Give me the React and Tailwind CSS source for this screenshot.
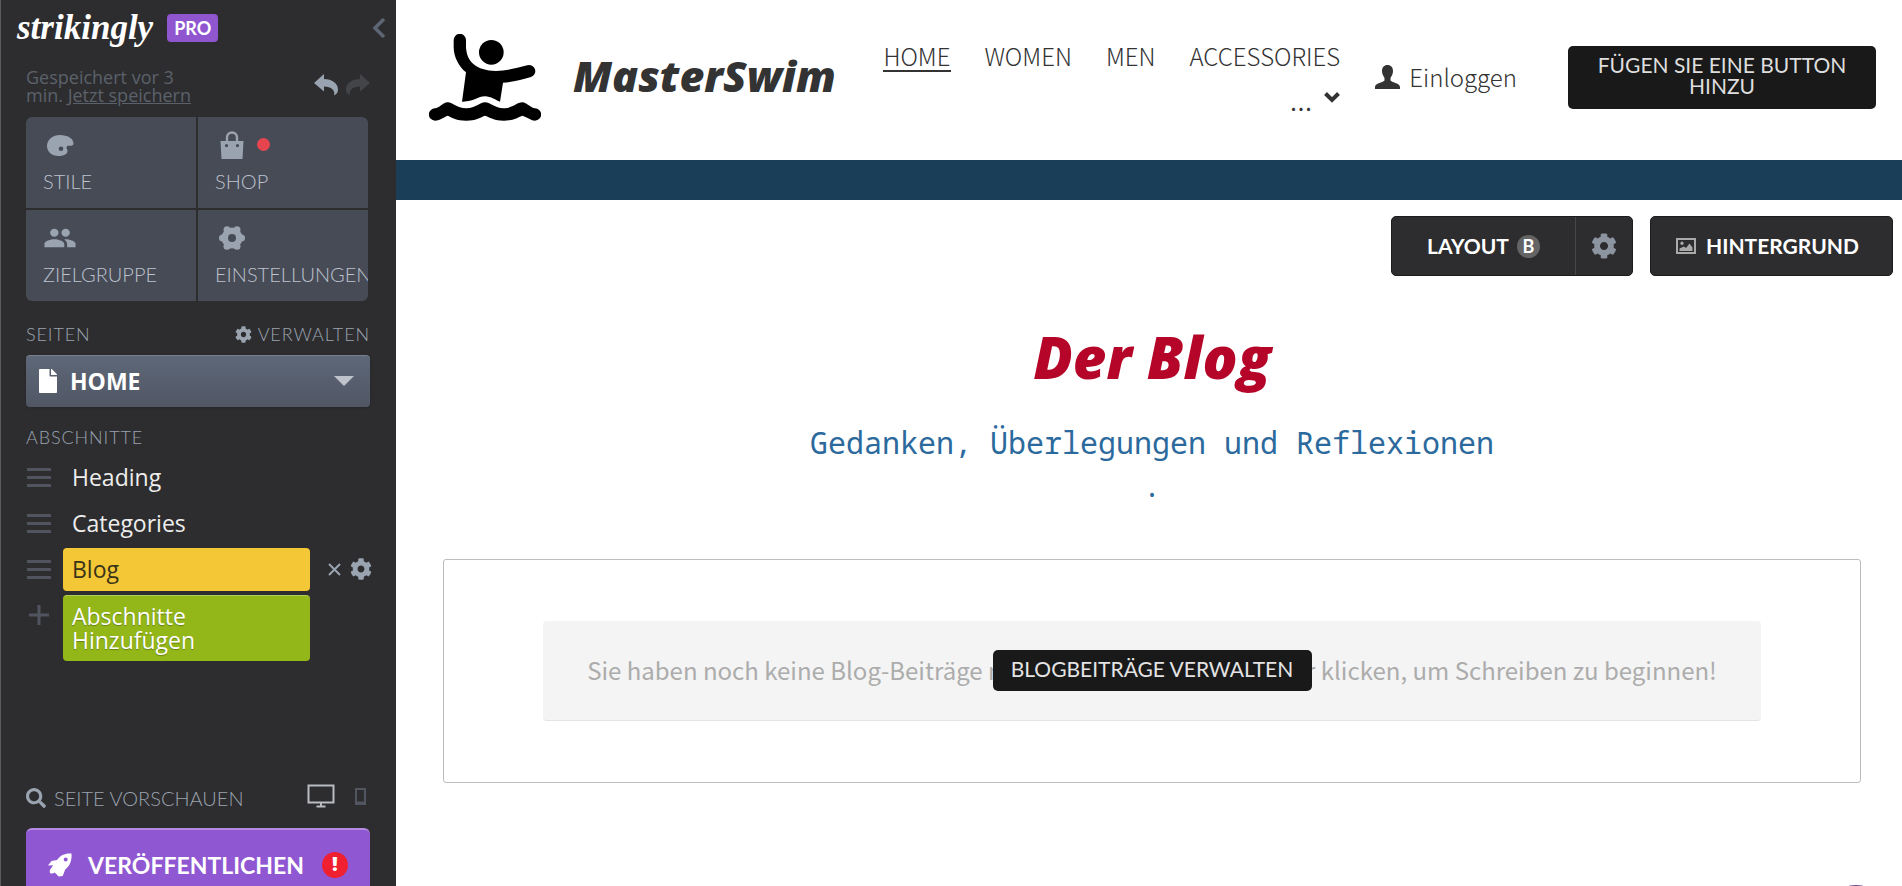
import React, { useState } from 'react';
import { FaCog, FaSearch, FaFile } from 'react-icons/fa';
import { MdPeople } from 'react-icons/md';

const tiles = [
  { label: 'STILE', icon: PaletteIcon, corner: 'rounded-tl-md' },
  { label: 'SHOP', icon: BagIcon, corner: 'rounded-tr-md', dot: true },
  { label: 'ZIELGRUPPE', icon: PeopleIcon, corner: 'rounded-bl-md' },
  { label: 'EINSTELLUNGEN', icon: FlowerGearIcon, corner: 'rounded-br-md' },
];

const navLinks = ['HOME', 'WOMEN', 'MEN', 'ACCESSORIES'];

function PaletteIcon() {
  return (
    <svg className="w-8 h-8" viewBox="0 0 32 32" fill="currentColor">
      <path
        fillRule="evenodd"
        d="M17 6C10 6 4 10.500 4 17c0 6 5 10 11.500 10 5 0 9-1.800 9-5 0-1.500-1-2-1-3.300 0-1.400 1.200-2 2.600-1.900 2.500.2 4.400-.3 4.400-2.300C30.500 9.500 24.500 6 17 6Zm1 11.500a2.300 2.300 0 1 1 0 4.600 2.300 2.300 0 0 1 0-4.600Z"
      />
    </svg>
  );
}

function BagIcon() {
  return (
    <svg className="w-8 h-8" viewBox="0 0 32 32" fill="currentColor">
      <path d="M12 12V8.500a5 5 0 0 1 10 0V12" fill="none" stroke="currentColor" strokeWidth="2.400" />
      <path
        fillRule="evenodd"
        d="M5.500 12h23l-1 18h-21ZM11.500 15a1.600 1.600 0 1 0 0 3.200 1.600 1.600 0 0 0 0-3.200Zm11 0a1.600 1.600 0 1 0 0 3.200 1.600 1.600 0 0 0 0-3.200Z"
      />
    </svg>
  );
}

function PeopleIcon() {
  return <MdPeople className="w-[34px] h-8" preserveAspectRatio="none" />;
}

function FlowerGearIcon() {
  return (
    <svg className="w-8 h-8" viewBox="0 0 32 32" fill="currentColor">
      <circle cx="17" cy="16" r="10.500" />
      <circle cx="7.500" cy="16" r="3.500" />
      <circle cx="26.500" cy="16" r="3.500" />
      <circle cx="12" cy="7.700" r="3.500" />
      <circle cx="22" cy="7.700" r="3.500" />
      <circle cx="12" cy="24.300" r="3.500" />
      <circle cx="22" cy="24.300" r="3.500" />
      <circle cx="17" cy="16" r="4" fill="#474b56" />
    </svg>
  );
}

function UndoIcon({ className }) {
  return (
    <svg className={className} viewBox="0 0 24 22" fill="currentColor">
      <path d="M10 0v5c8 0 14 4.500 14 10.500 0 2.500-1 4.500-4 6 1.500-5-2.500-9-10-9v5L0 9Z" />
    </svg>
  );
}

function RocketIcon() {
  return (
    <svg className="w-6 h-6" viewBox="0 0 24 24" fill="currentColor">
      <path
        fillRule="evenodd"
        d="M23.500.5C17 0 12.500 2 9 7L3.500 8 0 12.500l5-.3-2 3.300c-1.500 1-1.500 3-.8 4.700 1.500.5 3.300.3 4.500-.7l4 4 4-.5 2.500-6.500C22 13 24 7.500 23.500.5ZM17.700 4.500a2 2 0 1 1 0 4 2 2 0 0 1 0-4Z"
      />
    </svg>
  );
}

function SwimmerLogo() {
  return (
    <svg className="w-[112px] shrink-0" viewBox="99 102 336 260" role="img" aria-label="MasterSwim">
      <circle cx="286" cy="157" r="37" />
      <path d="M173 120a18.500 18.500 0 0 1 37 0v22c2 43 30 70 90 71 30-1 60-8 94-17a18 18 0 0 1 11 35c-25 8-55 15-84 17l-9 57c-12-4-27-16-45-16-22 0-35 17-69 16l12-88c-22-17-37-47-37-75Z" />
      <path d="M117 325c13 0 23-17 38-18 17 0 25 18 56 18 29 0 39-18 56-18 18 0 28 18 56 18 27 0 39-18 56-18 13 0 26 18 38 18a18 18 0 0 1 0 37c-12 0-22-10-38-15-14 6-29 15-56 15-28 0-38-9-56-15-17 6-27 15-56 15-31 0-41-9-56-15-15 6-25 15-38 15a18 18 0 0 1 0-37Z" />
    </svg>
  );
}

function DragHandle() {
  return (
    <button type="button" aria-label="Verschieben" className="w-6 flex flex-col gap-[5px] shrink-0">
      <span className="h-[3px] w-full bg-[#4f545e]" />
      <span className="h-[3px] w-full bg-[#4f545e]" />
      <span className="h-[3px] w-full bg-[#4f545e]" />
    </button>
  );
}

function Sidebar() {
  const [page, setPage] = useState('HOME');

  return (
    <aside className="w-[396px] shrink-0 h-screen overflow-hidden flex flex-col bg-[#2d2d2f] border-l border-[#5a5b5d] text-[#9aa3b0]">
      <div className="flex items-center pl-4 pr-[9px] h-14">
        <a href="#" className="font-['Liberation_Serif',serif] font-bold italic text-[35px] leading-10 text-white">strikingly</a>
        <span className="ml-[14px] px-[7px] h-7 rounded bg-[#8f56d0] text-white font-['Lato',sans-serif] font-bold text-lg leading-7">PRO</span>
        <button type="button" aria-label="Einklappen" className="ml-auto text-[#5e6675]">
          <svg className="w-4 h-5" viewBox="0 0 16 20" fill="none" stroke="currentColor" strokeWidth="3.500"><path d="M13 1 4 10l9 9" /></svg>
        </button>
      </div>

      <div className="pl-[25px] pr-[26px] flex flex-col">
        <div className="flex items-center justify-between pt-2 pb-[10px] h-[61px]">
          <p className="w-[180px] font-['Open_Sans',sans-serif] text-lg leading-[18px] text-[#5b616b]">
            Gespeichert vor 3 min. <a href="#" className="underline">Jetzt speichern</a>
          </p>
          <div className="flex gap-2 pb-[2px]">
            <button type="button" aria-label="Rückgängig"><UndoIcon className="w-6 h-[22px] text-[#9aa3b0]" /></button>
            <button type="button" aria-label="Wiederholen"><UndoIcon className="w-6 h-[22px] text-[#434549] -scale-x-100" /></button>
          </div>
        </div>

        <div className="grid grid-cols-2 gap-[2px] w-[342px]">
          {tiles.map(({ label, icon: Icon, corner, dot }) => (
            <button key={label} type="button" className={`${corner} h-[91px] pl-[17px] pb-1 bg-[#474b56] overflow-hidden text-left`}>
              <span className="flex items-center gap-[10px]">
                <Icon />
                {dot && <span className="w-[13px] h-[13px] rounded-full bg-[#e6454f]" />}
              </span>
              <span className="block mt-2 font-['Lato',sans-serif] font-light text-xl leading-6 text-[#bcc2ce]">{label}</span>
            </button>
          ))}
        </div>

        <div className="flex justify-between items-center mt-[21px] h-6 font-['Lato',sans-serif] font-light text-lg tracking-wider">
          <h2>SEITEN</h2>
          <a href="#" className="flex items-center gap-[6px]"><FaCog className="w-[17px] h-[17px]" />VERWALTEN</a>
        </div>
        <label className="mt-[9px] h-[52px] px-3 pb-[2px] flex items-center gap-3 rounded bg-linear-to-b from-[#5e6878] to-[#505664] border-t border-[#79818e] text-white shadow-sm">
          <FaFile className="w-5 h-6" aria-label="Seite" />
          <select value={page} onChange={(e) => setPage(e.target.value)} className="appearance-none flex-1 bg-transparent font-['Open_Sans',sans-serif] font-bold text-[23px] leading-8 outline-none">
            <option>HOME</option>
          </select>
          <svg className="w-5 h-[10px] mr-1 text-[#bfc3cc]" viewBox="0 0 20 10" fill="currentColor"><path d="M0 0h20L10 10Z" /></svg>
        </label>

        <h2 className="mt-[18px] leading-6 font-['Lato',sans-serif] font-light text-lg tracking-wider">ABSCHNITTE</h2>
        <ul className="mt-[5px] pl-px -mr-1 font-['Open_Sans',sans-serif] text-[23px] text-[#ededed]">
          <li className="flex items-center h-[46px]"><DragHandle /><a href="#" className="ml-3 pl-[9px]">Heading</a></li>
          <li className="flex items-center h-[46px]"><DragHandle /><a href="#" className="ml-3 pl-[9px]">Categories</a></li>
          <li className="flex items-center h-[46px]">
            <DragHandle />
            <a href="#" className="ml-3 pl-[9px] w-[247px] h-[43px] leading-[43px] shrink-0 rounded bg-[#f4c736] text-[#3a3418]">Blog</a>
            <button type="button" aria-label="Löschen" className="ml-[18px] text-[#9aa3b0]">
              <svg className="w-[13px] h-[13px]" viewBox="0 0 13 13" stroke="currentColor" strokeWidth="2"><path d="m1 1 11 11M12 1 1 12" /></svg>
            </button>
            <button type="button" aria-label="Einstellungen" className="ml-[9px] text-[#9aa3b0]"><FaCog className="w-[22px] h-[22px]" /></button>
          </li>
          <li className="flex mt-[3px]">
            <svg className="w-6 h-5 mt-[10px] text-[#4f545e]" viewBox="0 0 24 20" stroke="currentColor" strokeWidth="3"><path d="M12 0v20M2 10h20" /></svg>
            <button type="button" className="ml-3 pl-[9px] pb-[2px] w-[247px] h-[66px] text-left leading-6 rounded bg-[#93b719] border-t border-[#b0cb57] text-white [text-shadow:0_1px_1px_rgb(0_0_0/0.3)]">
              Abschnitte<br />Hinzufügen
            </button>
          </li>
        </ul>
      </div>

      <div className="mt-auto pl-[25px] pr-[26px]">
        <div className="flex items-center h-10 mb-[10px]">
          <a href="#" className="flex items-center gap-2 font-['Lato',sans-serif] font-light text-xl">
            <FaSearch className="w-5 h-5" />SEITE VORSCHAUEN
          </a>
          <button type="button" aria-label="Desktop" className="ml-auto pb-1 text-[#b9bcc0]">
            <svg className="w-7 h-6" viewBox="0 0 28 24" fill="none" stroke="currentColor" strokeWidth="2"><path d="M1.500 1.500h25v17h-25ZM14 18v4M9.500 22.500h9" /></svg>
          </button>
          <button type="button" aria-label="Mobil" className="ml-5 mr-1 pb-1 text-[#50555f]">
            <svg className="w-[11px] h-[17px]" viewBox="0 0 11 17" fill="none" stroke="currentColor" strokeWidth="2"><path d="M1 1h9v15H1ZM1 14.500h9" /></svg>
          </button>
        </div>
        <button type="button" className="w-full h-[58px] pt-[14px] flex items-center justify-center rounded-t-md bg-[#9057d2] border-t-2 border-[#b48ae2] text-white font-['Lato',sans-serif] font-bold text-[23px]">
          <RocketIcon />
          <span className="ml-4 mr-[18px]">VERÖFFENTLICHEN</span>
          <span className="w-[26px] h-[26px] rounded-full bg-[#ef2030] font-['Open_Sans',sans-serif] font-extrabold text-xl leading-6">!</span>
        </button>
      </div>
    </aside>
  );
}

function SiteHeader() {
  return (
    <header className="h-[160px] pl-[33px] pr-[26px] pb-[5px] flex items-center text-[#333] font-['Noto_Sans_CJK_SC',sans-serif] font-light text-2xl">
      <a href="#" className="flex items-center gap-8">
        <SwimmerLogo />
        <span className="pb-1 font-['Open_Sans',sans-serif] font-extrabold italic text-[43px] leading-[60px]">MasterSwim</span>
      </a>
      <nav className="ml-auto pb-[2px] flex flex-col items-end gap-3">
        <div className="flex gap-[34px]">
          {navLinks.map((link, i) => (
            <a key={link} href="#" className={i === 0 ? 'border-b-2 border-[#333] leading-7' : 'leading-7'}>{link}</a>
          ))}
        </div>
        <a href="#" className="flex items-center gap-3 leading-7">
          <span className="text-[30px]">...</span>
          <svg className="w-4 h-[11px]" viewBox="0 0 16 11" fill="none" stroke="currentColor" strokeWidth="4"><path d="m1.500 1.500 6.500 6.500 6.500-6.500" /></svg>
        </a>
      </nav>
      <a href="#" className="ml-[35px] flex items-center gap-[9px] pb-[2px]">
        <svg className="w-[25px] h-6" viewBox="0 0 25 24" fill="currentColor">
          <path d="M12.500 0C9 0 7 2.500 7 6c0 3.500 1.500 5 2.500 7v2.500C7.500 18 0 18 0 22v2h25v-2c0-4-7.500-4-9.500-6.500V13c1-2 2.500-3.500 2.500-7 0-3.500-2-6-5.500-6Z" />
        </svg>
        Einloggen
      </a>
      <button type="button" className="ml-[51px] w-[308px] h-[63px] px-4 pb-[6px] rounded-[5px] bg-[#191919] text-[#dedede] font-['Lato',sans-serif] font-normal text-[21px] leading-[21px]">
        FÜGEN SIE EINE BUTTON HINZU
      </button>
    </header>
  );
}

function SectionToolbar() {
  return (
    <div className="flex justify-end gap-[17px] pt-4 pr-[9px] font-['Lato',sans-serif] font-bold text-[21px] text-white">
      <div className="flex h-[60px] rounded-[5px] bg-[#2d2d2f] border border-[#1c1c1d]">
        <button type="button" className="w-[184px] flex items-center justify-center gap-2 border-r border-[#47474a]">
          LAYOUT
          <span className="w-[23px] h-[23px] rounded-full bg-[#646464] text-lg leading-[23px]">B</span>
        </button>
        <button type="button" aria-label="Layout-Einstellungen" className="w-14 flex items-center justify-center text-[#8b949f]"><FaCog className="w-[26px] h-[26px]" /></button>
      </div>
      <button type="button" className="w-[243px] h-[60px] pr-2 flex items-center justify-center gap-[10px] rounded-[5px] bg-[#2d2d2f] border border-[#1c1c1d]">
        <svg className="w-5 h-4" viewBox="0 0 20 16" fill="#a9a9a9"><path fillRule="evenodd" d="M0 0h20v16H0ZM2 2v12h16V2ZM3.500 13V10.500L8 8.500l2 1.500 3.500-4.500 3 4V13ZM6 3.500a1.700 1.700 0 1 1 0 3.400 1.700 1.700 0 0 1 0-3.400Z" /></svg>
        HINTERGRUND
      </button>
    </div>
  );
}

function BlogSection() {
  return (
    <section className="pl-[47px] pr-[41px] text-center">
      <h1 className="mt-[45px] leading-[72px] font-['Open_Sans',sans-serif] font-extrabold italic text-[58px] text-[#b50629]">Der Blog</h1>
      <p className="mt-7 font-['Noto_Sans_Mono','DejaVu_Sans_Mono',monospace] text-[30px] leading-[43px] text-[#2c6a9d]">
        Gedanken, Überlegungen und Reflexionen<br />.
      </p>
      <div className="mt-[52px] px-[99px] py-[61px] rounded-[3px] border border-[#bdbdbd]">
        <div className="relative h-[100px] flex items-center justify-center rounded bg-[#f4f4f4] border-b border-[#e4e4e4]">
          <p className="pb-[2px] whitespace-nowrap font-['Noto_Sans_CJK_SC',sans-serif] text-2xl text-[#acacac]">
            Sie haben noch keine Blog-Beiträge nicht veröffentlicht. Bitte hier klicken, um Schreiben zu beginnen!
          </p>
          <div className="absolute inset-0 flex items-center justify-center">
            <button type="button" className="w-[319px] h-[41px] pb-1 rounded-[5px] bg-[#191919] text-[#e4e4e4] font-['Lato',sans-serif] text-[21px]">
              BLOGBEITRÄGE VERWALTEN
            </button>
          </div>
        </div>
      </div>
    </section>
  );
}

function App() {
  return (
    <div className="flex h-screen overflow-hidden bg-white">
      <Sidebar />
      <main className="flex-1 min-w-0 overflow-hidden">
        <SiteHeader />
        <div className="h-10 bg-[#1a3d58]" />
        <SectionToolbar />
        <BlogSection />
      </main>
      {/* chat bubble, peeks in from the bottom edge */}
      <button type="button" aria-label="Hilfe" className="fixed right-4 -bottom-[59px] w-[60px] h-[60px] rounded-full bg-[#6c4a94]" />
    </div>
  );
}

export default App;
